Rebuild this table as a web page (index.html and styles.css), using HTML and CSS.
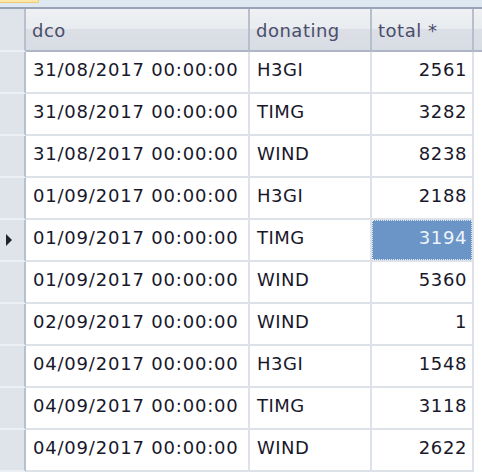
FILE: index.html
```html
<!DOCTYPE html>
<html>
<head>
<meta charset="utf-8">
<link rel="stylesheet" href="styles.css">
</head>
<body>
<div class="topbar"><div class="tab"></div></div>
<div class="grid">
  <div class="hd ind"></div><div class="hd">dco</div><div class="hd">donating</div><div class="hd">total *</div><div class="hd fill"></div>

  <div class="ind"></div><div class="c date">31/08/2017 00:00:00</div><div class="c">H3GI</div><div class="c num">2561</div><div class="f"></div>
  <div class="ind"></div><div class="c date">31/08/2017 00:00:00</div><div class="c">TIMG</div><div class="c num">3282</div><div class="f"></div>
  <div class="ind"></div><div class="c date">31/08/2017 00:00:00</div><div class="c">WIND</div><div class="c num">8238</div><div class="f"></div>
  <div class="ind"></div><div class="c date">01/09/2017 00:00:00</div><div class="c">H3GI</div><div class="c num">2188</div><div class="f"></div>
  <div class="ind cur"><span class="arrow"></span></div><div class="c date">01/09/2017 00:00:00</div><div class="c">TIMG</div><div class="c num sel"><span class="selbox">3194</span></div><div class="f"></div>
  <div class="ind"></div><div class="c date">01/09/2017 00:00:00</div><div class="c">WIND</div><div class="c num">5360</div><div class="f"></div>
  <div class="ind"></div><div class="c date">02/09/2017 00:00:00</div><div class="c">WIND</div><div class="c num">1</div><div class="f"></div>
  <div class="ind"></div><div class="c date">04/09/2017 00:00:00</div><div class="c">H3GI</div><div class="c num">1548</div><div class="f"></div>
  <div class="ind"></div><div class="c date">04/09/2017 00:00:00</div><div class="c">TIMG</div><div class="c num">3118</div><div class="f"></div>
  <div class="ind"></div><div class="c date">04/09/2017 00:00:00</div><div class="c">WIND</div><div class="c num">2622</div><div class="f"></div>
</div>
</body>
</html>
```
FILE: styles.css
```css
html, body {
  margin: 0;
  padding: 0;
  background: #ffffff;
  width: 482px;
  height: 472px;
  overflow: hidden;
}
body {
  font-family: "DejaVu Sans", Verdana, sans-serif;
  font-size: 18px;
  letter-spacing: 0.5px;
}
.topbar {
  height: 7px;
  background: #dde8f1;
  border-bottom: 2px solid #9aa3b5;
  position: relative;
}
.tab {
  width: 38px;
  height: 2px;
  background: #fde8a6;
  border-bottom: 1px solid #f1c878;
  border-right: 1px solid #f1c878;
  border-bottom-right-radius: 2px;
}
.grid {
  display: grid;
  grid-template-columns: 26px 224px 122px 102px 8px;
  grid-auto-rows: 42px;
  grid-template-rows: 43px;
}
.hd {
  box-sizing: border-box;
  height: 43px;
  background: linear-gradient(#eff1f4 0%, #e8ebef 48%, #dcdfe6 50%, #d8dce4 100%);
  border-right: 2px solid #b7bfcd;
  border-bottom: 2px solid #aeb6c5;
  color: #4a4e6a;
  padding: 2px 0 0 6px;
  line-height: 39px;
  white-space: nowrap;
}
.hd.ind {
  padding: 0;
}
.hd.fill {
  border-right: none;
  padding: 0;
}
.ind {
  box-sizing: border-box;
  background: #dfe3ea;
  border-right: 2px solid #b9c0cd;
  border-bottom: 2px solid #eceff3;
  position: relative;
}
.arrow {
  position: absolute;
  left: 6px;
  top: 14px;
  width: 0;
  height: 0;
  border-top: 6px solid transparent;
  border-bottom: 6px solid transparent;
  border-left: 6px solid #1f2430;
}
.c {
  box-sizing: border-box;
  background: #ffffff;
  border-right: 2px solid #dde1e8;
  border-bottom: 2px solid #dde1e8;
  color: #18182c;
  line-height: 36px;
  padding: 0 0 4px 7px;
  white-space: nowrap;
}
.date {
  letter-spacing: 0.8px;
}
.num {
  text-align: right;
  padding: 0 5px 4px 0;
  letter-spacing: 0.6px;
}
.f {
  background: #ffffff;
}
.sel {
  padding: 0;
}
.selbox {
  display: block;
  box-sizing: border-box;
  height: 40px;
  background: #6b95c7;
  outline: 1px dotted #e4ecf7;
  outline-offset: -1px;
  color: #eef3fb;
  padding: 0 5px 4px 0;
  line-height: 36px;
}
```
